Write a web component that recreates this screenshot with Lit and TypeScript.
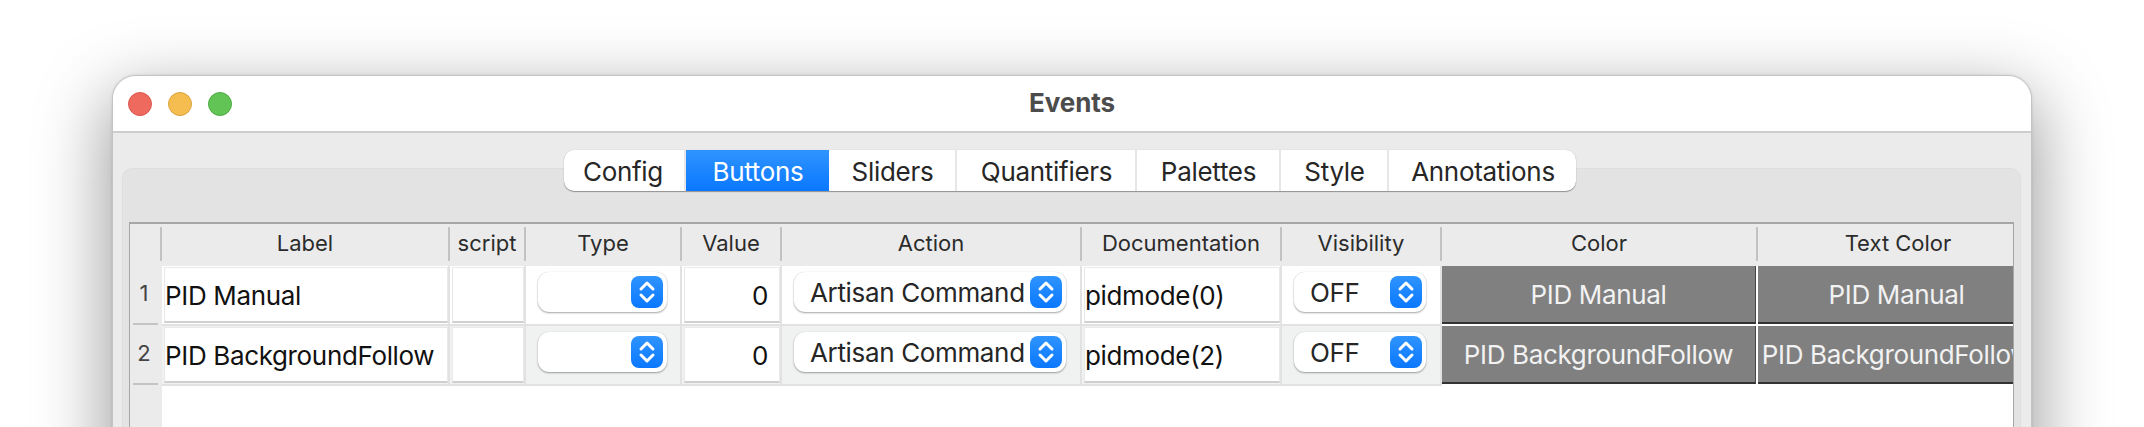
import { LitElement, html, css } from 'lit';
import { customElement } from 'lit/decorators.js';

const TABS = ['Config', 'Buttons', 'Sliders', 'Quantifiers', 'Palettes', 'Style', 'Annotations'];
const HEADERS = ['Label', 'script', 'Type', 'Value', 'Action', 'Documentation', 'Visibility', 'Color', 'Text Color'];
const ROWS = [
  { label: 'PID Manual', doc: 'pidmode(0)' },
  { label: 'PID BackgroundFollow', doc: 'pidmode(2)' },
];

@customElement('app-root')
export class AppRoot extends LitElement {
  static styles = css`
    :host {
      display: block;
      height: 427px;
      overflow: hidden;
      background: #fff;
      font-family: Inter, "Liberation Sans", sans-serif;
      color: #222;
    }
    .page {
      padding: 75px 112px 0;
    }
    .window {
      box-sizing: border-box;
      width: 1920px;
      height: 520px;
      border-radius: 24px 24px 0 0;
      border: 1px solid #c4c4c4;
      background: #ebebeb;
      box-shadow: 0 24px 70px 6px rgba(0, 0, 0, 0.38), 0 0 3px rgba(0, 0, 0, 0.12);
      overflow: hidden;
    }
    .titlebar {
      box-sizing: border-box;
      height: 57px;
      background: #fff;
      border-bottom: 2px solid #cdcdcd;
      display: flex;
      align-items: center;
      padding-left: 15px;
      position: relative;
    }
    .light {
      box-sizing: border-box;
      width: 24px;
      height: 24px;
      border-radius: 50%;
      margin-right: 16px;
      border: 1px solid transparent;
    }
    .red { background: #ee6a5f; border-color: #d9584e; }
    .yellow { background: #f5bd4f; border-color: #d9a23f; }
    .green { background: #61c454; border-color: #4fa944; }
    .title {
      position: absolute;
      left: 0;
      right: 0;
      text-align: center;
      font-size: 26px;
      font-weight: 700;
      color: #4c4c4c;
      letter-spacing: -0.1px;
      padding-bottom: 2px;
    }
    .body {
      padding: 17px 10px 0 9px;
    }
    .tabs {
      display: grid;
      grid-template-columns: 122px 143px 128px 180px 144px 108px 187px;
      width: 1012px;
      height: 41px;
      margin: 0 0 -23px 442px;
      position: relative;
      background: #fff;
      border-radius: 10px;
      box-shadow: 0 1px 1px rgba(0, 0, 0, 0.35), 0 0 1px rgba(0, 0, 0, 0.2);
      overflow: hidden;
    }
    .tab {
      box-sizing: border-box;
      display: flex;
      align-items: center;
      justify-content: center;
      padding: 1px 0 0 1px;
      font-size: 26px;
      letter-spacing: -0.3px;
      color: #262626;
      border-right: 2px solid #e6e6e6;
    }
    .tab:first-child { padding: 1px 2px 0 0; }
    .tab:last-child { border-right: 0; }
    .tab.active {
      background: linear-gradient(#2f94ff, #0a78ff);
      color: #fff;
      border-right: 0;
    }
    .panel {
      box-sizing: border-box;
      height: 400px;
      background: #e3e3e3;
      border: 1px solid #dedede;
      border-radius: 10px;
      padding: 53px 6px 0 6px;
    }
    .table {
      overflow: hidden;
      border: 1px solid #a6a6a6;
      border-top-width: 2px;
      background: #fff;
    }
    .row {
      display: grid;
      grid-template-columns: 32px 288px 76px 156px 100px 300px 200px 160px 316px 280px;
      width: 1908px;
    }
    .head {
      height: 42px;
      background: #ebebeb;
    }
    .hcell {
      box-sizing: border-box;
      height: 34px;
      margin-top: 3px;
      padding-bottom: 2px;
      border-right: 2px solid #c2c2c2;
      display: flex;
      align-items: center;
      justify-content: center;
      font-size: 22px;
      color: #2b2b2b;
    }
    .hcell.last { border-right: 0; }
    .data { height: 60px; }
    .data.alt .cell { background: #f0f1f1; }
    .gutter {
      background: #ebebeb;
      display: flex;
      align-items: center;
      justify-content: center;
      font-size: 22px;
      color: #444;
      position: relative;
      padding: 0 4px 6px 0;
      box-sizing: border-box;
    }
    .gutter::after {
      content: '';
      position: absolute;
      left: 3px;
      right: 4px;
      bottom: 1px;
      height: 2px;
      background: #c4c4c4;
    }
    .cell {
      box-sizing: border-box;
      background: #fff;
      border-right: 2px solid #e2e2e2;
      border-bottom: 2px solid #e2e2e2;
      display: flex;
      align-items: flex-start;
    }
    .input {
      box-sizing: border-box;
      flex: 1;
      height: 56px;
      margin: 1px 0 0 2px;
      background: #fff;
      border: 1px solid #e9e9e9;
      border-bottom: 2px solid #cfcfcf;
      display: flex;
      align-items: center;
      padding: 1px 0 0;
      font-size: 26px;
      letter-spacing: -0.35px;
      color: #111;
      white-space: nowrap;
    }
    .num {
      justify-content: flex-end;
      padding-right: 11px;
    }
    .combo {
      box-sizing: border-box;
      height: 40px;
      margin-top: 6px;
      background: #fff;
      border-radius: 11px;
      box-shadow: 0 1px 2px rgba(0, 0, 0, 0.35), 0 0 1px rgba(0, 0, 0, 0.15);
      display: flex;
      align-items: center;
      justify-content: space-between;
      padding: 0 4px 0 16px;
      font-size: 26px;
      letter-spacing: -0.35px;
      color: #262626;
      white-space: nowrap;
    }
    .c-type { width: 129px; margin-left: 12px; }
    .c-action { width: 272px; margin-left: 12px; }
    .c-vis { width: 132px; margin-left: 12px; }
    .stepper {
      flex: none;
      width: 32px;
      height: 32px;
      border-radius: 8px;
      background: linear-gradient(#2f94ff, #0a78ff);
    }
    .stepper svg { display: block; }
    .color {
      box-sizing: border-box;
      background: #808080;
      border-right: 1px solid #444;
      border-bottom: 2px solid #333;
      margin: 0 2px 2px 0;
      display: flex;
      align-items: center;
      justify-content: center;
      font-size: 26px;
      letter-spacing: -0.35px;
      color: #f2f2f2;
      white-space: nowrap;
    }
    .filler {
      height: 120px;
    }
    .filler .gutter::after { display: none; }
  `;

  private stepper() {
    return html`<div class="stepper">
      <svg width="32" height="32" viewBox="0 0 32 32" fill="none" stroke="#fff" stroke-width="3" stroke-linecap="round" stroke-linejoin="round">
        <path d="M10 13L16 7L22 13"></path>
        <path d="M10 19L16 25L22 19"></path>
      </svg>
    </div>`;
  }

  render() {
    return html`
      <div class="page">
        <div class="window">
          <div class="titlebar">
            <div class="light red"></div>
            <div class="light yellow"></div>
            <div class="light green"></div>
            <div class="title">Events</div>
          </div>
          <div class="body">
            <div class="tabs">
              ${TABS.map((t) => html`<div class="tab ${t === 'Buttons' ? 'active' : ''}">${t}</div>`)}
            </div>
            <div class="panel">
              <div class="table">
                <div class="row head">
                  <div class="hcell"></div>
                  ${HEADERS.map((h, i) => html`<div class="hcell ${i === HEADERS.length - 1 ? 'last' : ''}">${h}</div>`)}
                </div>
                ${ROWS.map((r, i) => html`
                  <div class="row data ${i % 2 ? 'alt' : ''}">
                    <div class="gutter">${i + 1}</div>
                    <div class="cell"><div class="input">${r.label}</div></div>
                    <div class="cell"><div class="input"></div></div>
                    <div class="cell"><div class="combo c-type"><span></span>${this.stepper()}</div></div>
                    <div class="cell"><div class="input num">0</div></div>
                    <div class="cell"><div class="combo c-action"><span>Artisan Command</span>${this.stepper()}</div></div>
                    <div class="cell"><div class="input">${r.doc}</div></div>
                    <div class="cell"><div class="combo c-vis"><span>OFF</span>${this.stepper()}</div></div>
                    <div class="color">${r.label}</div>
                    <div class="color">${r.label}</div>
                  </div>
                `)}
                <div class="row filler"><div class="gutter"></div></div>
              </div>
            </div>
          </div>
        </div>
      </div>
    `;
  }
}
